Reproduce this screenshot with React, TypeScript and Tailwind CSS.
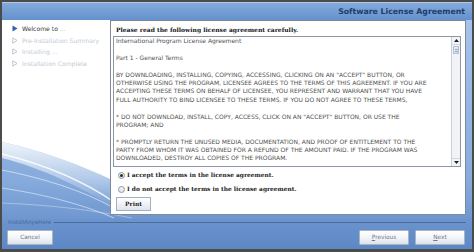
import React from "react";

const licenseLines: string[] = [
  "International Program License Agreement",
  "",
  "Part 1 - General Terms",
  "",
  'BY DOWNLOADING, INSTALLING, COPYING, ACCESSING, CLICKING ON AN "ACCEPT" BUTTON, OR',
  "OTHERWISE USING THE PROGRAM, LICENSEE AGREES TO THE TERMS OF THIS AGREEMENT. IF YOU ARE",
  "ACCEPTING THESE TERMS ON BEHALF OF LICENSEE, YOU REPRESENT AND WARRANT THAT YOU HAVE",
  "FULL AUTHORITY TO BIND LICENSEE TO THESE TERMS. IF YOU DO NOT AGREE TO THESE TERMS,",
  "",
  '* DO NOT DOWNLOAD, INSTALL, COPY, ACCESS, CLICK ON AN "ACCEPT" BUTTON, OR USE THE',
  "PROGRAM; AND",
  "",
  "* PROMPTLY RETURN THE UNUSED MEDIA, DOCUMENTATION, AND PROOF OF ENTITLEMENT TO THE",
  "PARTY FROM WHOM IT WAS OBTAINED FOR A REFUND OF THE AMOUNT PAID. IF THE PROGRAM WAS",
  "DOWNLOADED, DESTROY ALL COPIES OF THE PROGRAM.",
];

function Tri({ active }: { active: boolean }) {
  return (
    <svg width="6" height="7" viewBox="0 0 6 7" className="shrink-0">
      {active ? (
        <path d="M0.5 0.5 L5.5 3.5 L0.5 6.5 Z" fill="#2b5fb3" />
      ) : (
        <path d="M0.8 0.8 L5 3.5 L0.8 6.2 Z" fill="none" stroke="#b7bfca" strokeWidth="0.9" />
      )}
    </svg>
  );
}

function Radio({ checked }: { checked: boolean }) {
  return (
    <div className="w-[7px] h-[7px] rounded-full border border-[#8d96a3] bg-gradient-to-b from-[#f4f6f9] to-[#dfe4ea] flex items-center justify-center shrink-0">
      {checked && <div className="w-[3px] h-[3px] rounded-full bg-[#2a2a2a]" />}
    </div>
  );
}

function Btn({ w, children }: { w: string; children: React.ReactNode }) {
  return (
    <div
      className={`${w} h-[15px] border border-[#a8b4c5] rounded-[1px] bg-gradient-to-b from-[#ffffff] via-[#f3f5f8] to-[#dde3eb] flex items-center justify-center text-[5.8px] text-[#6d7888] font-['DejaVu_Sans',sans-serif]`}
    >
      {children}
    </div>
  );
}

export default function App() {
  return (
    <div className="w-[474px] h-[252px] bg-[#4b4b4b] pt-[2px] px-[2px] pb-[3px] font-['DejaVu_Sans',sans-serif]">
      <div className="w-[470px] h-[247px] flex flex-col overflow-hidden">
        {/* header */}
        <div className="h-[18px] shrink-0 border-t border-[#b5c9e6] bg-gradient-to-b from-[#84aadc] to-[#6491cc] flex items-center justify-end pr-[7px]">
          <span className="text-[7.8px] font-bold text-[#1d3d6d] leading-none">Software License Agreement</span>
        </div>

        {/* body */}
        <div className="relative flex-1">
          <svg className="absolute inset-0" width="470" height="229" viewBox="0 0 470 229">
            <defs>
              <linearGradient id="bg" x1="0" y1="0" x2="0" y2="1">
                <stop offset="0" stopColor="#a6c3ea" />
                <stop offset="0.7" stopColor="#86abdc" />
                <stop offset="0.85" stopColor="#7299d1" />
                <stop offset="1" stopColor="#5884c2" />
              </linearGradient>
              <linearGradient id="fade" x1="0" y1="0" x2="0" y2="1">
                <stop offset="0" stopColor="#ffffff" stopOpacity="1" />
                <stop offset="1" stopColor="#ffffff" stopOpacity="0" />
              </linearGradient>
            </defs>
            <rect x="0" y="0" width="470" height="229" fill="url(#bg)" />
            <path d="M0 0 H110 V160 C85 148 45 132 0 122 Z" fill="#ffffff" />
            <path d="M0 122 C45 132 85 148 110 160 V186 C80 168 40 148 0 138 Z" fill="url(#fade)" opacity="0.85" />
            <path d="M0 134 C40 144 80 160 112 182" stroke="#ffffff" strokeOpacity="0.85" strokeWidth="1.4" fill="none" />
            <path d="M0 150 C40 158 80 170 112 188" stroke="#ffffff" strokeOpacity="0.55" strokeWidth="1" fill="none" />
            <path d="M0 168 C40 174 75 182 112 198" stroke="#ffffff" strokeOpacity="0.5" strokeWidth="1.2" fill="none" />
            <path d="M0 183 C50 185 90 190 130 198" stroke="#ffffff" strokeOpacity="0.35" strokeWidth="1" fill="none" />
            <rect x="0" y="199" width="470" height="30" fill="#6791cc" opacity="0.3" />
          </svg>

          <div className="relative flex flex-col h-full">
            <div className="flex h-[195px]">
              {/* steps */}
              <div className="w-[108px] pt-[3px] pl-[10px] text-[6.1px]">
                <div className="h-[11.6px] flex items-center gap-[4px]">
                  <Tri active />
                  <span className="text-[#3a3a3a]">
                    Welcome to <span className="text-[#e0b08a]">...</span>
                  </span>
                </div>
                <div className="h-[11.6px] flex items-center gap-[4px]">
                  <Tri active={false} />
                  <span className="text-[#c2cad5]">Pre-Installation Summary</span>
                </div>
                <div className="h-[11.6px] flex items-center gap-[4px]">
                  <Tri active={false} />
                  <span className="text-[#c2cad5]">Installing ...</span>
                </div>
                <div className="h-[11.6px] flex items-center gap-[4px]">
                  <Tri active={false} />
                  <span className="text-[#c2cad5]">Installation Complete</span>
                </div>
              </div>

              {/* main panel */}
              <div className="w-[356px] h-[195px] bg-white border border-[#7f8a98] flex flex-col">
                <div className="mt-[2px] h-[13px] leading-[13px] pl-[5px] text-[6px] font-bold text-[#151515] font-['DejaVu_Serif',serif] whitespace-nowrap">
                  Please read the following license agreement carefully.
                </div>
                <div className="ml-[2px] w-[348px] h-[131px] border border-[#8b95a3] flex">
                  <div className="flex-1 pl-[2px] pt-[0px] text-[6px] leading-[8.4px] text-[#505050] overflow-hidden">
                    {licenseLines.map((l, i) => (
                      <div key={i} className="h-[8.4px] whitespace-pre">
                        {l === "" ? "\u00a0" : l}
                      </div>
                    ))}
                  </div>
                  <div className="w-[9px] border-l border-[#c9d0da] bg-[#f1f3f6] flex flex-col justify-between">
                    <div className="flex flex-col">
                      <div className="h-[8px] flex items-center justify-center border-b border-[#d3d9e1]">
                        <svg width="5" height="3" viewBox="0 0 5 3">
                          <path d="M0 3 L2.5 0 L5 3 Z" fill="#222" />
                        </svg>
                      </div>
                      <div className="h-[8px] mx-[1px] mt-[1px] border border-[#b3c2d6] bg-gradient-to-b from-[#e8eef6] to-[#d3deec] flex flex-col items-center justify-center gap-[1px]">
                        <div className="w-[3px] h-px bg-[#9aaac0]" />
                        <div className="w-[3px] h-px bg-[#9aaac0]" />
                      </div>
                    </div>
                    <div className="h-[8px] flex items-center justify-center border-t border-[#d3d9e1]">
                      <svg width="5" height="3" viewBox="0 0 5 3">
                        <path d="M0 0 L2.5 3 L5 0 Z" fill="#222" />
                      </svg>
                    </div>
                  </div>
                </div>
                <div className="mt-[1px] h-[14px] flex items-center pl-[7px] gap-[2px]">
                  <Radio checked />
                  <span className="text-[5.9px] font-bold text-[#1a1a1a] font-['DejaVu_Serif',serif] whitespace-nowrap">
                    I accept the terms in the license agreement.
                  </span>
                </div>
                <div className="h-[14px] flex items-center pl-[7px] gap-[2px]">
                  <Radio checked={false} />
                  <span className="text-[5.9px] font-bold text-[#1a1a1a] font-['DejaVu_Serif',serif] whitespace-nowrap">
                    I do not accept the terms in the license agreement.
                  </span>
                </div>
                <div className="mt-[1px] ml-[5px] w-[35px] h-[14px] border border-[#a3b0c2] bg-gradient-to-b from-[#ffffff] to-[#dfe5ed] flex items-center justify-center text-[5.9px] font-bold text-[#222] font-['DejaVu_Serif',serif]">
                  Print
                </div>
              </div>
            </div>

            {/* footer */}
            <div className="h-[15px] flex items-center pl-[6px] pr-[6px] gap-[3px]">
              <span className="text-[5.4px] text-[#4a6a97] whitespace-nowrap">InstallAnywhere</span>
              <div className="flex-1 h-px bg-[#4c6d9c]" />
            </div>
            <div className="h-[15px] flex items-center justify-between pl-[5px] pr-[7px]">
              <Btn w="w-[46px]">Cancel</Btn>
              <div className="flex gap-[6px]">
                <Btn w="w-[50px]">
                  <span>
                    <span className="underline">P</span>revious
                  </span>
                </Btn>
                <Btn w="w-[50px]">
                  <span>
                    <span className="underline">N</span>ext
                  </span>
                </Btn>
              </div>
            </div>
          </div>
        </div>
      </div>
    </div>
  );
}
